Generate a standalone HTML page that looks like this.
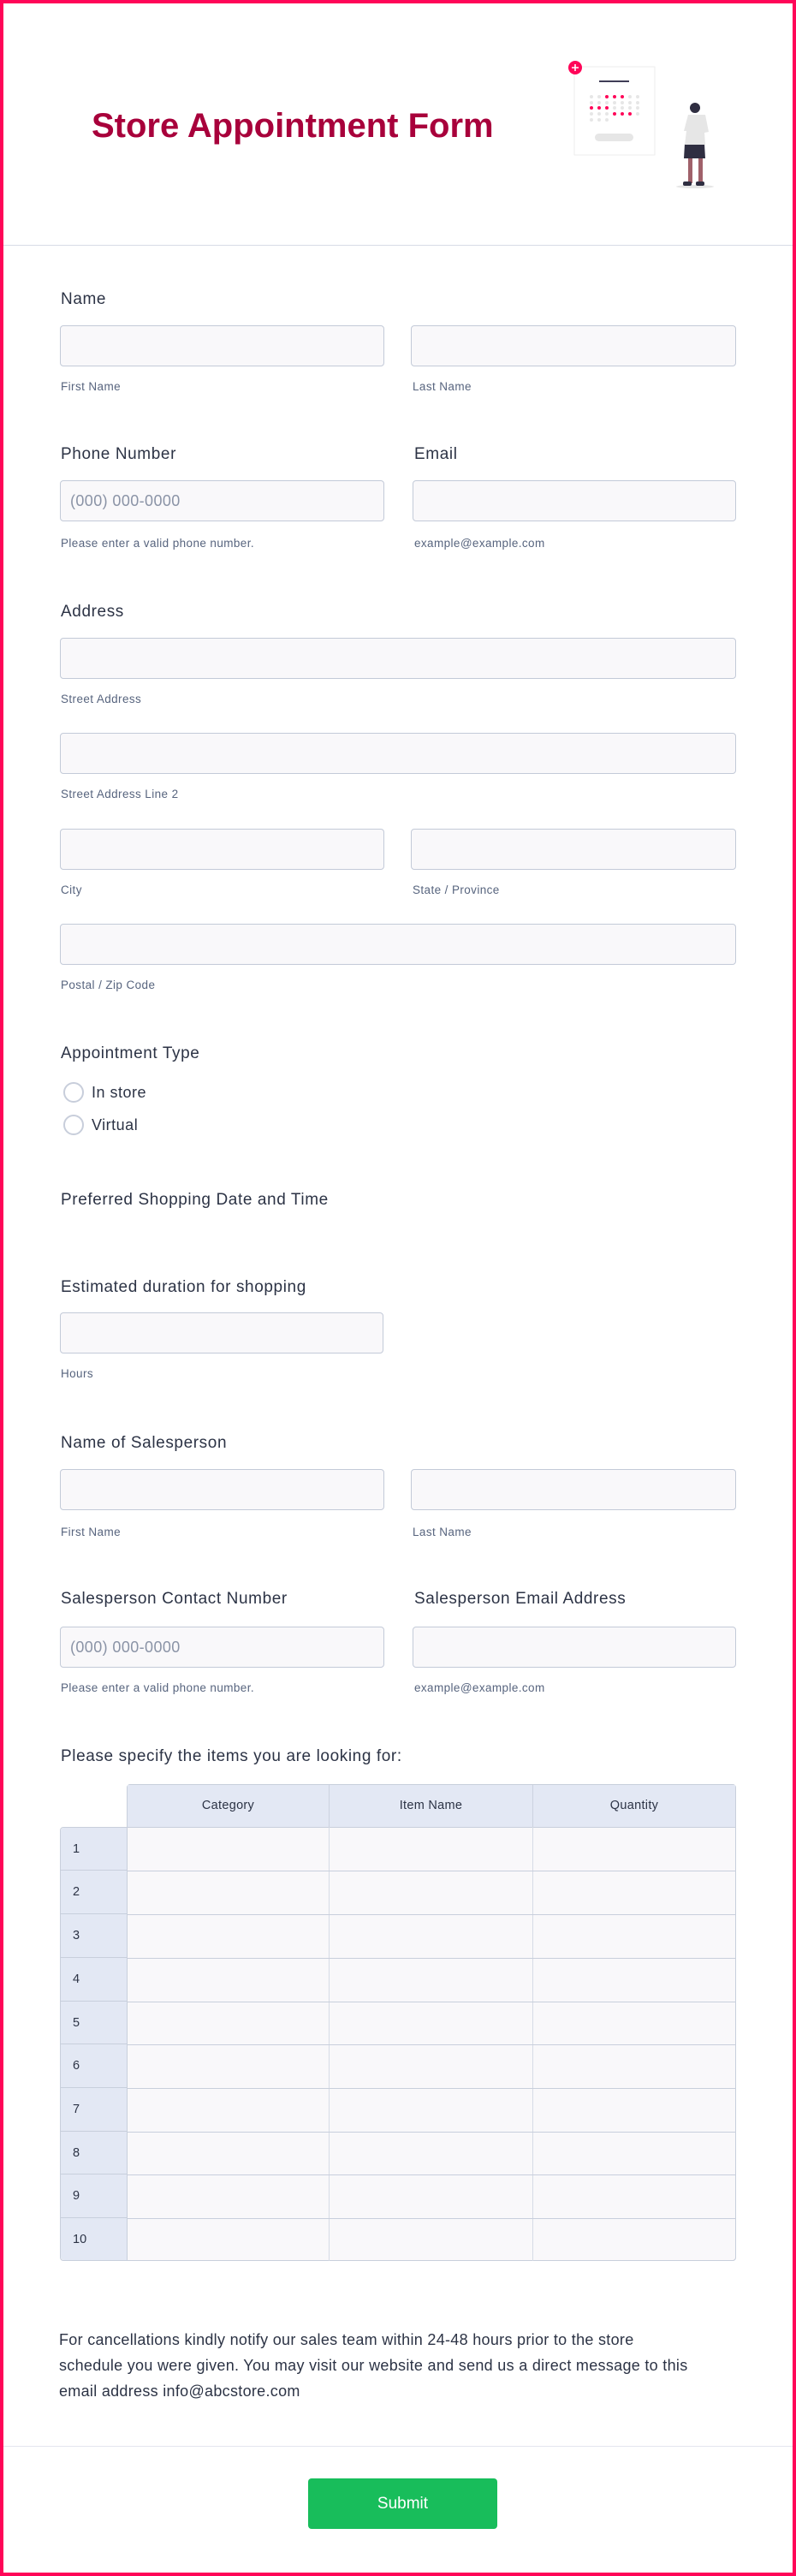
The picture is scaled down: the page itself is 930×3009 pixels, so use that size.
<!DOCTYPE html>
<html><head><meta charset="utf-8"><style>
*{box-sizing:border-box;margin:0;padding:0}
body{width:930px;height:3009px;position:relative;background:#fff;font-family:"Liberation Sans",sans-serif;color:#2c3345;overflow:hidden}
.frame{position:absolute;left:0;top:0;width:930px;height:3009px;border:4px solid #ff0558;pointer-events:none;z-index:9}
.a{position:absolute}
.lbl{position:absolute;left:71px;font-size:19px;letter-spacing:0.6px;color:#2c3345;line-height:22px;white-space:nowrap}
.sub{position:absolute;font-size:13.5px;letter-spacing:0.4px;color:#57647e;line-height:16px;white-space:nowrap}
.in{position:absolute;height:48px;background:#f9f8fa;border:1px solid #c3cad8;border-radius:4px}
.ph{font-size:18px;letter-spacing:0.4px;color:#8a93a6;padding:12px 11px;line-height:22px}
.hd{position:absolute;background:#e3e8f4;border-right:1px solid #ccd2df;font-size:14.5px;letter-spacing:0.3px;text-align:center;line-height:49px;color:#2c3345}
.rl{position:absolute;left:71px;width:77px;background:#e3e8f4;border-bottom:1px solid #c8cfdc;font-size:14.5px;padding-left:14px;color:#2c3345;height:51px;line-height:50px}
.hl{position:absolute;left:149px;width:710px;height:1px;background:#c8cfdc}
</style></head><body>
<div class="frame"></div>
<div class="a" style="left:107px;top:122px;font-size:40px;font-weight:bold;color:#a8003b;line-height:50px;white-space:nowrap">Store Appointment Form</div>
<svg class="a" style="left:640px;top:60px" width="200" height="170" viewBox="640 60 200 170">
<rect x="671" y="78" width="94" height="103" fill="#fff" stroke="#eee"/>
<rect x="700" y="94" width="35" height="2" fill="#3f3d56"/>
<g fill="#e6e6e6">
<circle cx="691" cy="113" r="2"/><circle cx="700" cy="113" r="2"/><circle cx="736" cy="113" r="2"/><circle cx="745" cy="113" r="2"/>
<circle cx="691" cy="120" r="2"/><circle cx="700" cy="120" r="2"/><circle cx="709" cy="120" r="2"/><circle cx="718" cy="120" r="2"/><circle cx="727" cy="120" r="2"/><circle cx="736" cy="120" r="2"/><circle cx="745" cy="120" r="2"/>
<circle cx="718" cy="126" r="2"/><circle cx="727" cy="126" r="2"/><circle cx="736" cy="126" r="2"/><circle cx="745" cy="126" r="2"/>
<circle cx="691" cy="133" r="2"/><circle cx="700" cy="133" r="2"/><circle cx="709" cy="133" r="2"/><circle cx="745" cy="133" r="2"/>
<circle cx="691" cy="140" r="2"/><circle cx="700" cy="140" r="2"/><circle cx="709" cy="140" r="2"/>
<rect x="695" y="156" width="45" height="9" rx="4.5"/>
<ellipse cx="812" cy="218" rx="22" ry="2"/></g>
<g fill="#ff0558">
<circle cx="709" cy="113" r="2"/><circle cx="718" cy="113" r="2"/><circle cx="727" cy="113" r="2"/>
<circle cx="691" cy="126" r="2"/><circle cx="700" cy="126" r="2"/><circle cx="709" cy="126" r="2"/>
<circle cx="718" cy="133" r="2"/><circle cx="727" cy="133" r="2"/><circle cx="736" cy="133" r="2"/>
<circle cx="672" cy="79" r="8"/></g>
<path d="M672 75v8M668 79h8" stroke="#fff" stroke-width="1.6"/>
<rect x="804" y="184" width="5" height="30" fill="#a0616a"/><rect x="816" y="184" width="5" height="30" fill="#a0616a"/>
<rect x="798" y="212" width="10" height="5" rx="2" fill="#2f2e41"/><rect x="813" y="212" width="10" height="5" rx="2" fill="#2f2e41"/>
<path d="M800 168h23l1 17h-25z" fill="#2f2e41"/>
<path d="M804 134h20l4 20-5 1 1 14h-24l2-16-3 0z" fill="#e6e6e6"/>
<circle cx="812" cy="126" r="6" fill="#2f2e41"/>
</svg>
<div class="a" style="left:4px;top:286px;width:922px;height:1px;background:#d8dce6"></div>

<div class="lbl" style="top:339px">Name</div>
<div class="in" style="left:70px;top:380px;width:379px"></div>
<div class="in" style="left:480px;top:380px;width:380px"></div>
<div class="sub" style="left:71px;top:444px">First Name</div>
<div class="sub" style="left:482px;top:444px">Last Name</div>

<div class="lbl" style="top:520px">Phone Number</div>
<div class="lbl" style="top:520px;left:484px">Email</div>
<div class="in ph" style="left:70px;top:561px;width:379px">(000) 000-0000</div>
<div class="in" style="left:482px;top:561px;width:378px"></div>
<div class="sub" style="left:71px;top:627px">Please enter a valid phone number.</div>
<div class="sub" style="left:484px;top:627px">example@example.com</div>

<div class="lbl" style="top:704px">Address</div>
<div class="in" style="left:70px;top:745px;width:790px"></div>
<div class="sub" style="left:71px;top:809px">Street Address</div>
<div class="in" style="left:70px;top:856px;width:790px"></div>
<div class="sub" style="left:71px;top:920px">Street Address Line 2</div>
<div class="in" style="left:70px;top:968px;width:379px"></div>
<div class="in" style="left:480px;top:968px;width:380px"></div>
<div class="sub" style="left:71px;top:1032px">City</div>
<div class="sub" style="left:482px;top:1032px">State / Province</div>
<div class="in" style="left:70px;top:1079px;width:790px"></div>
<div class="sub" style="left:71px;top:1143px">Postal / Zip Code</div>

<div class="lbl" style="top:1220px">Appointment Type</div>
<div class="a" style="left:74px;top:1264px;width:24px;height:24px;border:2px solid #c8cedb;border-radius:50%"></div>
<div class="a" style="left:107px;top:1265px;font-size:18px;letter-spacing:0.5px;line-height:22px">In store</div>
<div class="a" style="left:74px;top:1302px;width:24px;height:24px;border:2px solid #c8cedb;border-radius:50%"></div>
<div class="a" style="left:107px;top:1303px;font-size:18px;letter-spacing:0.5px;line-height:22px">Virtual</div>

<div class="lbl" style="top:1391px">Preferred Shopping Date and Time</div>
<div class="lbl" style="top:1493px">Estimated duration for shopping</div>
<div class="in" style="left:70px;top:1533px;width:378px"></div>
<div class="sub" style="left:71px;top:1597px">Hours</div>

<div class="lbl" style="top:1675px">Name of Salesperson</div>
<div class="in" style="left:70px;top:1716px;width:379px"></div>
<div class="in" style="left:480px;top:1716px;width:380px"></div>
<div class="sub" style="left:71px;top:1782px">First Name</div>
<div class="sub" style="left:482px;top:1782px">Last Name</div>

<div class="lbl" style="top:1857px">Salesperson Contact Number</div>
<div class="lbl" style="top:1857px;left:484px">Salesperson Email Address</div>
<div class="in ph" style="left:70px;top:1900px;width:379px">(000) 000-0000</div>
<div class="in" style="left:482px;top:1900px;width:378px"></div>
<div class="sub" style="left:71px;top:1964px">Please enter a valid phone number.</div>
<div class="sub" style="left:484px;top:1964px">example@example.com</div>

<div class="lbl" style="top:2041px">Please specify the items you are looking for:</div>
<div class="a" style="left:148px;top:2084px;width:712px;height:557px;border:1px solid #c8cfdc;border-radius:4px 4px 4px 0"></div>
<div class="hd" style="left:149px;top:2085px;width:236px;height:49px">Category</div>
<div class="hd" style="left:385px;top:2085px;width:238px;height:49px">Item Name</div>
<div class="hd" style="left:623px;top:2085px;width:236px;height:49px;border-right:none">Quantity</div>
<div class="a" style="left:70px;top:2134px;width:790px;height:507px;border:1px solid #c8cfdc;border-radius:4px 0 4px 4px;background:#f9f8fa"></div>
<div class="a" style="left:148px;top:2134px;width:1px;height:507px;background:#c8cfdc"></div>
<div class="a" style="left:384px;top:2134px;width:1px;height:507px;background:#d6dbe5"></div>
<div class="a" style="left:622px;top:2134px;width:1px;height:507px;background:#d6dbe5"></div>
<div class="rl" style="top:2135px;height:50px;border-radius:4px 0 0 0">1</div>
<div class="rl" style="top:2185px">2</div>
<div class="rl" style="top:2236px">3</div>
<div class="rl" style="top:2287px">4</div>
<div class="rl" style="top:2338px;height:50px">5</div>
<div class="rl" style="top:2388px">6</div>
<div class="rl" style="top:2439px">7</div>
<div class="rl" style="top:2490px;height:50px">8</div>
<div class="rl" style="top:2540px">9</div>
<div class="rl" style="top:2591px;height:49px;border-bottom:none;border-radius:0 0 0 4px">10</div>
<div class="hl" style="top:2185px"></div><div class="hl" style="top:2236px"></div><div class="hl" style="top:2287px"></div>
<div class="hl" style="top:2338px"></div><div class="hl" style="top:2388px"></div><div class="hl" style="top:2439px"></div>
<div class="hl" style="top:2490px"></div><div class="hl" style="top:2540px"></div><div class="hl" style="top:2591px"></div>

<div class="a" style="left:69px;top:2718px;font-size:18px;letter-spacing:0.3px;line-height:30px;color:#2c3345;white-space:nowrap">For cancellations kindly notify our sales team within 24-48 hours prior to the store<br>schedule you were given. You may visit our website and send us a direct message to this<br>email address info@abcstore.com</div>
<div class="a" style="left:4px;top:2857px;width:922px;height:1px;background:#e4e6ee"></div>
<div class="a" style="left:360px;top:2895px;width:221px;height:59px;background:#18bd5b;border-radius:4px;color:#fff;font-size:19px;text-align:center;line-height:59px">Submit</div>
</body></html>
